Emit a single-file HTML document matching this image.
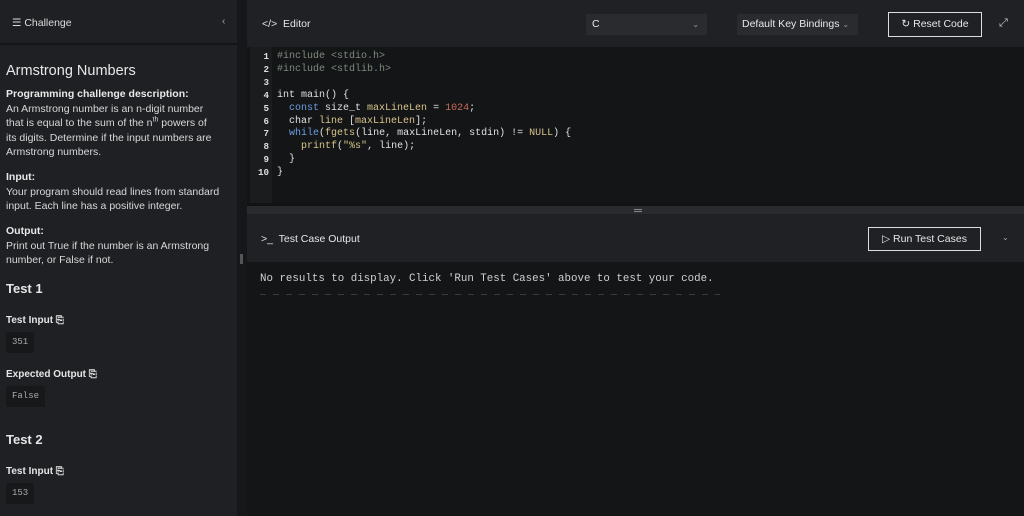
<!DOCTYPE html>
<html><head><style>
*{margin:0;padding:0;box-sizing:border-box}
body{width:1024px;height:516px;overflow:hidden;background:#151618;font-family:"Liberation Sans",sans-serif;color:#e6e6e6;position:relative}
.a{position:absolute}
.side{left:0;top:0;width:237px;height:516px;background:#1f2023}
.mono{font-family:"Liberation Mono",monospace}
.sb p{font-size:10.5px;line-height:14.5px;color:#d8d8d8}
.sb b{font-weight:bold;color:#e8e8e8}
.box{background:#17181a;border-radius:2px;font-family:"Liberation Mono",monospace;font-size:9px;color:#aaa;padding:0 6px;height:21px;line-height:21px;display:inline-block}
.code{font-family:"Liberation Mono",monospace;font-size:10px;line-height:12.9px;white-space:pre;color:#e0e0e0}
.ln{font-family:"Liberation Mono",monospace;font-size:9.2px;line-height:12.9px;color:#ddd;text-align:right;font-weight:bold}
.cm{color:#7d8a7d}.kw{color:#6d9ee0}.nm{color:#c86a5a}.fn{color:#d8c48a}
</style></head><body>
<div class="a side sb">
 <div class="a" style="left:0;top:0;width:237px;height:45px;border-bottom:2px solid #141517"></div>
 <div class="a" style="left:12px;top:17px;font-size:10.5px;color:#ddd">☰&nbsp;Challenge</div>
 <div class="a" style="left:222px;top:16px;font-size:10px;color:#aaa">‹</div>
 <div class="a" style="left:6px;top:63px;font-size:14.5px;color:#e8e8e8">Armstrong Numbers</div>
 <div class="a" style="left:6px;top:87px;width:212px"><p><b>Programming challenge description:</b><br>An Armstrong number is an n-digit number that is equal to the sum of the n<sup style="font-size:7px;line-height:0">th</sup> powers of its digits. Determine if the input numbers are Armstrong numbers.</p></div>
 <div class="a" style="left:6px;top:170px;width:225px"><p><b>Input:</b><br>Your program should read lines from standard input. Each line has a positive integer.</p></div>
 <div class="a" style="left:6px;top:224px;width:225px"><p><b>Output:</b><br>Print out True if the number is an Armstrong number, or False if not.</p></div>
 <div class="a" style="left:6px;top:281px;font-size:13px;font-weight:bold">Test 1</div>
 <div class="a" style="left:6px;top:315px;font-size:10px;font-weight:bold">Test Input ⎘</div>
 <div class="a box" style="left:6px;top:332px">351</div>
 <div class="a" style="left:6px;top:369px;font-size:10px;font-weight:bold">Expected Output ⎘</div>
 <div class="a box" style="left:6px;top:386px">False</div>
 <div class="a" style="left:6px;top:432px;font-size:13px;font-weight:bold">Test 2</div>
 <div class="a" style="left:6px;top:466px;font-size:10px;font-weight:bold">Test Input ⎘</div>
 <div class="a box" style="left:6px;top:483px">153</div>
</div>
<div class="a" style="left:237px;top:0;width:10px;height:516px;background:#161719"></div>
<div class="a" style="left:240px;top:254px;width:3px;height:10px;background:#555"></div>
<div class="a" style="left:247px;top:0;width:777px;height:47px;background:#202124"></div>
<div class="a" style="left:262px;top:18px;font-size:10.5px;color:#e6e6e6">&lt;/&gt;&nbsp; Editor</div>
<div class="a" style="left:586px;top:14px;width:121px;height:21px;background:#2a2b2e;font-size:10.5px;line-height:21px;padding-left:6px">C<span class="a" style="right:8px;top:0;color:#999;font-size:8px">⌄</span></div>
<div class="a" style="left:737px;top:14px;width:121px;height:21px;background:#2a2b2e;font-size:10.5px;line-height:21px;padding-left:5px">Default Key Bindings <span style="color:#999;font-size:8px">⌄</span></div>
<div class="a" style="left:888px;top:12px;width:94px;height:25px;border:1px solid #ddd;font-size:10.5px;line-height:23px;text-align:center">↻ Reset Code</div>
<div class="a" style="left:999px;top:17px;font-size:11px;color:#ccc">⤢</div>
<div class="a" style="left:247px;top:47px;width:777px;height:156px;background:#141517"></div>
<div class="a" style="left:250px;top:47px;width:22px;height:156px;background:#1b1c1e"></div>
<div class="a ln" style="left:250px;top:51px;width:19px">1<br>2<br>3<br>4<br>5<br>6<br>7<br>8<br>9<br>10</div>
<div class="a code" style="left:277px;top:51px"><span class="cm">#include &lt;stdio.h&gt;</span>
<span class="cm">#include &lt;stdlib.h&gt;</span>

int main() {
  <span class="kw">const</span> size_t <span class="fn">maxLineLen</span> = <span class="nm">1024</span>;
  char <span class="fn">line</span> [<span class="fn">maxLineLen</span>];
  <span class="kw">while</span>(<span class="fn">fgets</span>(line, maxLineLen, stdin) != <span class="fn">NULL</span>) {
    <span class="fn">printf</span>(<span class="fn">"%s"</span>, line);
  }
}</div>
<div class="a" style="left:247px;top:203px;width:777px;height:3px;background:#111214"></div>
<div class="a" style="left:247px;top:206px;width:777px;height:8px;background:#2a2b2e"></div>
<div class="a" style="left:634px;top:209px;width:8px;height:3px;border-top:1px solid #888;border-bottom:1px solid #888"></div>
<div class="a" style="left:247px;top:214px;width:777px;height:48px;background:#202124"></div>
<div class="a" style="left:261px;top:233px;font-size:10.5px">&gt;_&nbsp; Test Case Output</div>
<div class="a" style="left:868px;top:227px;width:113px;height:24px;border:1px solid #ddd;font-size:10.5px;line-height:22px;text-align:center">▷ Run Test Cases</div>
<div class="a" style="left:1002px;top:233px;font-size:8px;color:#aaa">⌄</div>
<div class="a" style="left:247px;top:262px;width:777px;height:254px;background:#141517"></div>
<div class="a mono" style="left:260px;top:273px;font-size:10.8px;color:#d0d0d0">No results to display. Click 'Run Test Cases' above to test your code.</div>
<div class="a" style="left:260px;top:294px;width:460px;height:1px;background:repeating-linear-gradient(90deg,#3a3b3e 0 6px,transparent 6px 13px)"></div>
</body></html>
